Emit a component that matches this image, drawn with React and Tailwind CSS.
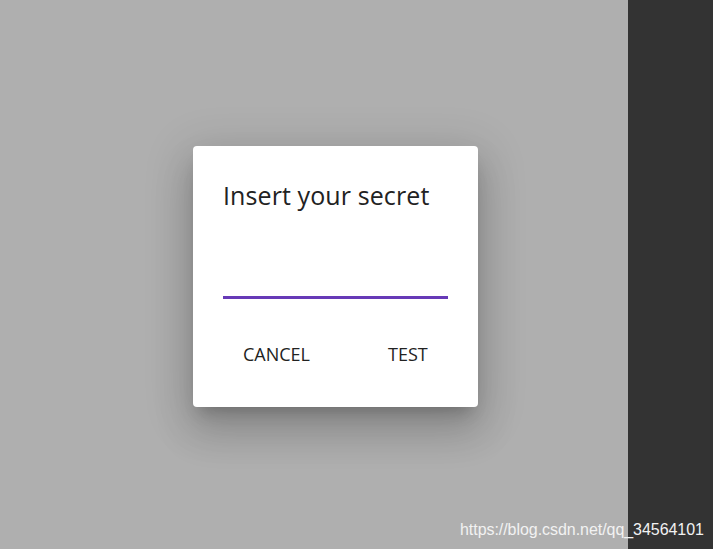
import React from "react";

export default function App() {
  return (
    <div className="relative flex h-[549px] w-[713px] overflow-hidden bg-[#afafaf] font-['Segoe_UI','Open_Sans',sans-serif]">
      <div className="flex-1 pl-[193px] pt-[146px]">
        <div className="flex h-[261px] w-[285px] flex-col rounded-[4px] bg-white shadow-[0_11px_15px_-7px_rgba(0,0,0,.2),0_24px_38px_3px_rgba(0,0,0,.14),0_9px_46px_8px_rgba(0,0,0,.12)]">
          <div className="px-[30px] pt-[31px] text-[25px] tracking-[0.1px] leading-[36px] text-[#222]">Insert your secret</div>
          <div className="mx-[30px] mt-[83px] h-[3px] w-[225px] bg-[#673ab7]" />
          <div className="mt-[43px] flex pl-[50px] text-[18px] leading-[24px] text-[#222]">
            <span className="w-[145px]">CANCEL</span>
            <span>TEST</span>
          </div>
        </div>
      </div>
      <div className="w-[85px] bg-[#333333]" />
      <div className="absolute left-[460px] top-[518px] font-['Liberation_Sans',sans-serif] text-[16px] tracking-[-0.05px] leading-[24px] text-[#f2f2f2]">
        https://blog.csdn.net/qq_34564101
      </div>
    </div>
  );
}
